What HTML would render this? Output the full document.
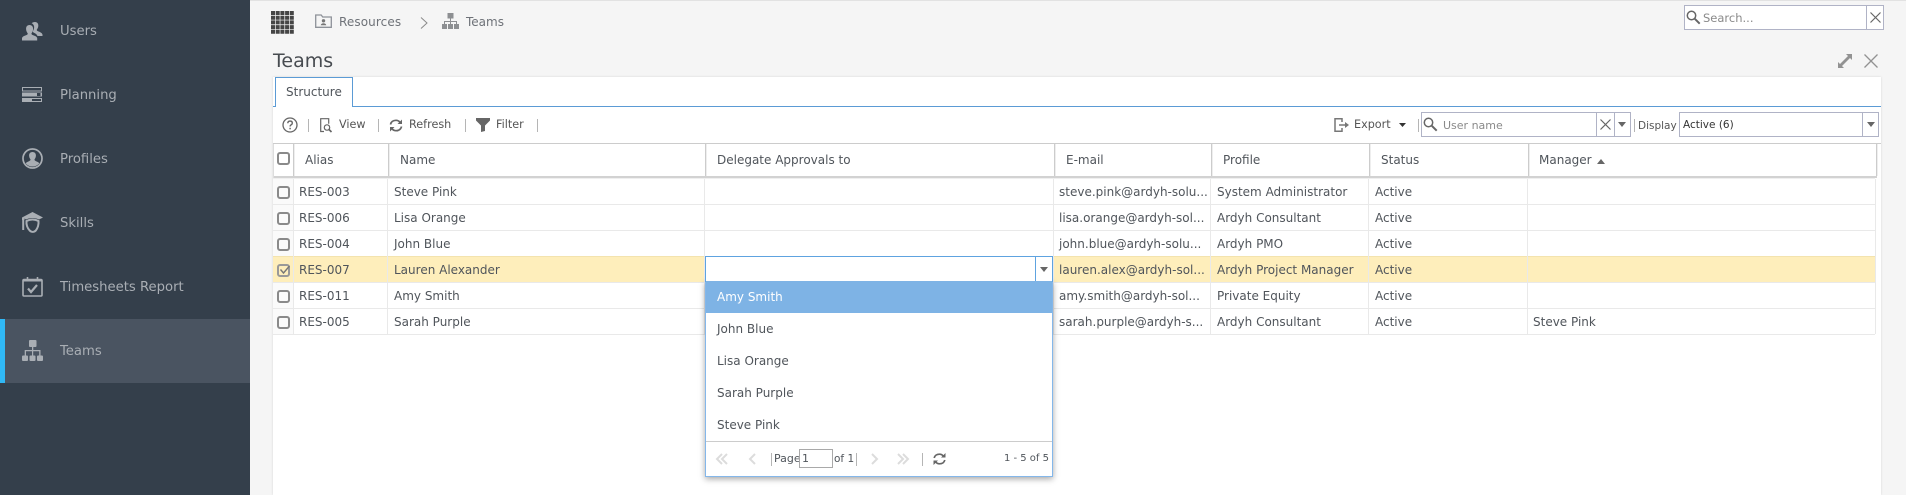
<!DOCTYPE html>
<html><head><meta charset="utf-8"><title>Teams</title>
<style>
html,body{margin:0;padding:0}
body{width:1906px;height:495px;overflow:hidden;background:#f5f5f5;position:relative;font-family:"DejaVu Sans","Liberation Sans",sans-serif;font-size:12px;color:#50555b}
.a{position:absolute}
.t{position:absolute;white-space:nowrap;line-height:20px;height:20px}
.h{position:absolute;background:#e9e9e9}
.nav{font-size:13.2px;color:#a9aeb4;left:60px}
.cb{position:absolute;width:9px;height:9px;border:2px solid #8a8a8a;border-radius:3px;left:277px}
.vs{position:absolute;width:1px;background:#b5b5b5}
.hs{position:absolute;top:144px;height:32px;width:2px;border-left:1px solid #ccc;border-right:1px solid #eee;box-sizing:border-box}
.box{position:absolute;box-sizing:border-box;border:1px solid #b0b3c6;background:#fff}
svg{position:absolute;overflow:visible}
</style></head><body>
<!-- sidebar -->
<div class="a" style="left:0;top:0;width:250px;height:495px;background:#343f4b"></div>
<div class="a" style="left:0;top:319px;width:250px;height:64px;background:#4a5461"></div>
<div class="a" style="left:0;top:319px;width:5px;height:64px;background:#30b8f5"></div>
<div class="t nav" style="top:22px">Users</div>
<div class="t nav" style="top:86px">Planning</div>
<div class="t nav" style="top:150px">Profiles</div>
<div class="t nav" style="top:214px">Skills</div>
<div class="t nav" style="top:278px">Timesheets Report</div>
<div class="t nav" style="top:342px">Teams</div>

<svg style="left:22px;top:21px" width="21" height="20" fill="#a9aeb4"><path d="M13 1c2.500 0 3.500 2 3.300 4-.1 1.500-.8 2.800-1.500 3.600-.2.800.3 1.300 1.500 1.800 1.800.7 3.700 1.400 4.200 3.200v1.400h-5c-.6-1.800-2-2.600-3.800-3.400-.8-.4-1-.9-.8-1.600.8-1.200 1.400-2.500 1.200-4.500C11.900 4 10.600 2.600 9.600 2.300 10.400 1.500 11.500 1 13 1z"/><path d="M7.500 4c2.500 0 3.800 2 3.600 4.200-.1 1.700-.8 3-1.600 4-.2 1 .4 1.500 1.700 2 1.800.7 3.400 1.200 4 2.800v2.500H0v-2.500c.6-1.600 2.200-2.100 4-2.800 1.300-.5 1.900-1 1.700-2-.8-1-1.500-2.300-1.600-4C3.900 6 5 4 7.500 4z"/></svg>

<svg style="left:22px;top:87px" width="20" height="15"><rect x=".5" y=".5" width="19" height="3.500" fill="#343f4b" stroke="#a9aeb4"/><rect x="0" y="5.500" width="20" height="4" fill="#a9aeb4"/><rect x="15" y="6" width="3.500" height="3" fill="#343f4b"/><rect x="0" y="11" width="20" height="4" fill="#a9aeb4"/><rect x="10" y="12" width="9" height="2" fill="#343f4b"/></svg>

<svg style="left:22px;top:148px" width="21" height="21" fill="none"><circle cx="10.500" cy="10.500" r="9.500" stroke="#a9aeb4" stroke-width="1.700"/><path fill="#a9aeb4" d="M10.500 4c2.400 0 3.600 1.800 3.400 3.900-.1 1.500-.7 2.600-1.400 3.500-.1.900.4 1.300 1.500 1.800 1.300.5 2.700 1 3.300 2-1.500 2-3.900 3.300-6.800 3.300s-5.300-1.300-6.800-3.300c.6-1 2-1.500 3.300-2 1.100-.5 1.600-.9 1.500-1.800-.7-.9-1.300-2-1.400-3.500C6.900 5.800 8.100 4 10.500 4z"/></svg>

<svg style="left:22px;top:212px" width="21" height="21" fill="none" stroke="#a9aeb4"><path fill="#a9aeb4" stroke="none" d="M10.500 0L21 5.500 17 7.500C15 6.500 13 6 10.500 6S6 6.500 4 7.500L2.500 6.500V8H0V5.500z"/><path stroke-width="2" d="M1.200 7v11"/><path stroke-width="2" d="M4.500 9c4-2 8-2 12 0 .3 3.500-.8 7-2.700 9.500-1.800 1.800-4.300 1.800-6.100 0C5.300 16 4.200 12.500 4.500 9z"/></svg>

<svg style="left:22px;top:277px" width="21" height="20" fill="none" stroke="#a9aeb4"><rect x="1" y="2.500" width="19" height="16.500" rx="1" stroke-width="1.600"/><path stroke-width="2" d="M1 3.500h19"/><path stroke-width="1.600" d="M5.500 0v4M15.500 0v4"/><path stroke-width="2.200" d="M6 11.500l3 3.500 6-7"/></svg>

<svg style="left:22px;top:340px" width="21" height="21" fill="#a9aeb4"><rect x="7" y="0" width="7.500" height="7" rx="1"/><rect x="0" y="15.500" width="6" height="5.500" rx="1"/><rect x="7.500" y="15.500" width="6" height="5.500" rx="1"/><rect x="15" y="15.500" width="6" height="5.500" rx="1"/><path d="M10 7h1.300v3H18.500v5.500h-1.300V11.200h-6v4.300H10v-4.300H4v4.300H2.700V10H10z"/></svg>

<!-- top bar -->
<div class="a" style="left:250px;top:0;width:1656px;height:1px;background:#e2e2e2"></div>
<svg style="left:271px;top:11px" width="23" height="23"><path fill="#454545" d="M0 0h4v4H0zM4.700 0h4v4h-4zM9.400 0h4v4h-4zM14.100 0h4v4h-4zM18.800 0h4v4h-4zM0 4.700h4v4H0zM4.700 4.700h4v4h-4zM9.400 4.700h4v4h-4zM14.100 4.700h4v4h-4zM18.800 4.700h4v4h-4zM0 9.400h4v4H0zM4.700 9.400h4v4h-4zM9.400 9.400h4v4h-4zM14.100 9.400h4v4h-4zM18.800 9.400h4v4h-4zM0 14.100h4v4H0zM4.700 14.100h4v4h-4zM9.400 14.100h4v4h-4zM14.100 14.100h4v4h-4zM18.800 14.100h4v4h-4zM0 18.800h4v4H0zM4.700 18.800h4v4h-4zM9.400 18.800h4v4h-4zM14.100 18.800h4v4h-4zM18.800 18.800h4v4h-4z"/></svg>
<svg style="left:315px;top:14px" width="17" height="14" fill="none" stroke="#8e9299" stroke-width="1.300"><path d="M.7 13.300V1h5.500l1.500 2h8.600v10.300z"/><circle cx="8.500" cy="6.800" r="1.700" fill="#777" stroke="none"/><path fill="#777" stroke="none" d="M5.700 11.200c.3-1.500 1.500-2 2.800-2s2.500.5 2.800 2z"/></svg>
<div class="t" style="left:339px;top:12px;color:#6e7278;letter-spacing:.1px">Resources</div>
<svg style="left:420px;top:17px" width="8" height="12" fill="none" stroke="#8a8a8a"><path d="M1 .5l6 5.500-6 5.500"/></svg>
<svg style="left:442px;top:13px" width="17" height="16" fill="#8d8f92"><rect x="5.500" y="0" width="6" height="5.500"/><rect x="0" y="11" width="5" height="5"/><rect x="6" y="11" width="5" height="5"/><rect x="12" y="11" width="5" height="5"/><path d="M8 5.500h1V8h6v3h-1V9H9v2H8V9H3v2H2V8h6z"/></svg>
<div class="t" style="left:466px;top:12px;color:#6e7278">Teams</div>
<div class="t" style="left:273px;top:51px;font-size:19px;color:#474b50">Teams</div>

<!-- top-right search -->
<div class="box" style="left:1684px;top:5px;width:200px;height:25px"></div>
<div class="a" style="left:1866px;top:6px;width:1px;height:23px;background:#b0b3c6"></div>
<svg style="left:1686px;top:10px" width="15" height="15" fill="none" stroke="#666" stroke-width="1.500"><circle cx="5.500" cy="5.500" r="4.200"/><path stroke-width="2" d="M8.700 8.700l5 5"/></svg>
<div class="t" style="left:1703px;top:8px;color:#8a8a8a;font-size:11.500px">Search...</div>
<svg style="left:1870px;top:12px" width="11" height="11" fill="none" stroke="#666" stroke-width="1.200"><path d="M.5.500l10 10M10.500.500l-10 10"/></svg>
<svg style="left:1838px;top:54px" width="14" height="14" fill="#929292"><path d="M8 0H14v6l-2-2-8 8L6 14H0V8l2 2 8-8z"/></svg>
<svg style="left:1864px;top:54px" width="14" height="14" fill="none" stroke="#929292" stroke-width="1.300"><path d="M.5.500l13 13M13.500.500l-13 13"/></svg>

<!-- panel -->
<div class="a" style="left:273px;top:77px;width:1608px;height:418px;background:#fff;box-shadow:0 0 2px #d5d5d5"></div>
<div class="a" style="left:273px;top:106px;width:1608px;height:1px;background:#5b9bd5"></div>
<div class="a" style="left:275px;top:77px;width:78px;height:30px;box-sizing:border-box;border:1px solid #5b9bd5;border-bottom:none;background:#fff"></div>
<div class="t" style="left:286px;top:82px;color:#50555b">Structure</div>

<!-- toolbar -->
<svg style="left:282px;top:117px" width="16" height="16" fill="none" stroke="#666"><circle cx="8" cy="8" r="7" stroke-width="1.300"/><path stroke-width="1.400" d="M5.800 6.300c0-1.500 1-2.200 2.300-2.200s2.200.8 2.200 2-.9 1.500-1.500 2c-.5.400-.7.700-.7 1.400"/><path stroke-width="1.500" d="M8.100 10.800v1.500"/></svg>
<div class="vs" style="left:308px;top:119px;height:13px"></div>
<svg style="left:320px;top:118px" width="12" height="15" fill="none" stroke="#666"><path stroke-width="1.200" d="M4 13.500H.7V.7h8v5"/><circle cx="7" cy="9.500" r="2.700" stroke-width="1.200"/><path stroke-width="1.700" d="M9 11.500l2.500 2.500"/></svg>
<div class="t" style="left:339px;top:115px;font-size:11.200px;color:#555">View</div>
<div class="vs" style="left:378px;top:119px;height:13px"></div>
<svg style="left:389px;top:119px" width="14" height="13" fill="none" stroke="#666" stroke-width="1.700"><path d="M1.500 5.500C2 3 4 1.300 7 1.300c1.700 0 3 .7 4 2M12.500 7.500c-.5 2.500-2.500 4.200-5.500 4.200-1.700 0-3-.7-4-2"/><path fill="#666" stroke="none" d="M13 .5v4.500H8.500zM1 12.500V8h4.500z"/></svg>
<div class="t" style="left:409px;top:115px;font-size:11.200px;color:#555">Refresh</div>
<div class="vs" style="left:465px;top:119px;height:13px"></div>
<svg style="left:476px;top:118px" width="14" height="14" fill="#666"><path d="M0 0h14v2.500L9 7.500V13l-4 1V7.500L0 2.500z"/></svg>
<div class="t" style="left:496px;top:115px;font-size:11.200px;color:#555">Filter</div>
<div class="vs" style="left:537px;top:119px;height:13px"></div>

<svg style="left:1334px;top:118px" width="15" height="14" fill="none" stroke="#777" stroke-width="1.500"><path d="M8 4V.8H1v12.400h7V10"/><path d="M5 7h7"/><path fill="#777" stroke="none" d="M11 4l4 3-4 3z"/></svg>
<div class="t" style="left:1354px;top:115px;font-size:11.200px;color:#555">Export</div>
<svg style="left:1399px;top:123px" width="7" height="4" fill="#333"><path d="M0 0h7L3.500 4z"/></svg>
<div class="vs" style="left:1418px;top:119px;height:13px"></div>
<div class="box" style="left:1421px;top:112px;width:210px;height:25px"></div>
<div class="a" style="left:1596px;top:113px;width:1px;height:23px;background:#b0b3c6"></div>
<div class="a" style="left:1614px;top:113px;width:1px;height:23px;background:#b0b3c6"></div>
<svg style="left:1423px;top:117px" width="15" height="15" fill="none" stroke="#666" stroke-width="1.500"><circle cx="5.500" cy="5.500" r="4.200"/><path stroke-width="2" d="M8.700 8.700l5 5"/></svg>
<div class="t" style="left:1443px;top:116px;color:#8a8a8a;font-size:11px">User name</div>
<svg style="left:1600px;top:119px" width="11" height="11" fill="none" stroke="#666" stroke-width="1.200"><path d="M.5.500l10 10M10.500.500l-10 10"/></svg>
<svg style="left:1618px;top:122px" width="8" height="5" fill="#666"><path d="M0 0h8L4 5z"/></svg>
<div class="vs" style="left:1634px;top:119px;height:13px"></div>
<div class="t" style="left:1638px;top:116px;font-size:10.500px;color:#555">Display</div>
<div class="box" style="left:1679px;top:112px;width:200px;height:25px"></div>
<div class="a" style="left:1862px;top:113px;width:1px;height:23px;background:#b0b3c6"></div>
<div class="t" style="left:1683px;top:115px;font-size:10.500px;color:#333">Active (6)</div>
<svg style="left:1867px;top:122px" width="8" height="5" fill="#666"><path d="M0 0h8L4 5z"/></svg>

<!-- grid header -->
<div class="a" style="left:273px;top:143px;width:1608px;height:1px;background:#ccc"></div>
<div class="a" style="left:273px;top:176px;width:1604px;height:2px;background:#d2d2d2"></div>
<div class="a" style="left:273px;top:178px;width:1602px;height:1px;background:#efefef"></div>
<div class="a" style="left:273px;top:144px;width:1px;height:34px;background:#ddd"></div>
<div class="hs" style="left:293px"></div><div class="hs" style="left:388px"></div><div class="hs" style="left:705px"></div><div class="hs" style="left:1054px"></div><div class="hs" style="left:1211px"></div><div class="hs" style="left:1369px"></div><div class="hs" style="left:1528px"></div><div class="hs" style="left:1876px"></div>
<div class="cb" style="left:277px;top:152px"></div>
<div class="t" style="left:305px;top:150px">Alias</div>
<div class="t" style="left:400px;top:150px">Name</div>
<div class="t" style="left:717px;top:150px">Delegate Approvals to</div>
<div class="t" style="left:1066px;top:150px">E-mail</div>
<div class="t" style="left:1223px;top:150px">Profile</div>
<div class="t" style="left:1381px;top:150px">Status</div>
<div class="t" style="left:1539px;top:150px">Manager</div>
<svg style="left:1597px;top:159px" width="8" height="5" fill="#666"><path d="M4 0l4 5H0z"/></svg>

<!-- rows -->
<div class="a" style="left:273px;top:256px;width:1602px;height:26px;background:#feeebb"></div>
<div class="a" style="left:273px;top:179px;width:20px;height:155px;background:#fafafa"></div>
<div class="a" style="left:273px;top:256px;width:20px;height:26px;background:#feeebb"></div>
<div class="h" style="left:273px;top:204px;width:1602px;height:1px"></div>
<div class="h" style="left:273px;top:230px;width:1602px;height:1px"></div>
<div class="h" style="left:273px;top:256px;width:1602px;height:1px;background:#f3e3ae"></div>
<div class="h" style="left:273px;top:282px;width:1602px;height:1px"></div>
<div class="h" style="left:273px;top:308px;width:1602px;height:1px"></div>
<div class="h" style="left:273px;top:334px;width:1602px;height:1px"></div>
<div class="h" style="left:293px;top:179px;width:1px;height:155px"></div>
<div class="h" style="left:387px;top:179px;width:1px;height:155px"></div>
<div class="h" style="left:704px;top:179px;width:1px;height:155px"></div>
<div class="h" style="left:1053px;top:179px;width:1px;height:155px"></div>
<div class="h" style="left:1210px;top:179px;width:1px;height:155px"></div>
<div class="h" style="left:1368px;top:179px;width:1px;height:155px"></div>
<div class="h" style="left:1527px;top:179px;width:1px;height:155px"></div>
<div class="h" style="left:1875px;top:179px;width:1px;height:155px"></div>

<div class="cb" style="top:186px"></div><div class="cb" style="top:212px"></div><div class="cb" style="top:238px"></div>
<div class="cb" style="top:264px;border-color:#999"></div><div class="cb" style="top:290px"></div><div class="cb" style="top:316px"></div>
<svg style="left:279px;top:265px" width="12" height="10" fill="none" stroke="#777" stroke-width="1.400"><path d="M1.500 4.500l3 3.500 6-7"/></svg>

<div class="t" style="left:299px;top:182px">RES-003</div><div class="t" style="left:394px;top:182px">Steve Pink</div><div class="t" style="left:1059px;top:182px">steve.pink@ardyh-solu...</div><div class="t" style="left:1217px;top:182px">System Administrator</div><div class="t" style="left:1375px;top:182px">Active</div>
<div class="t" style="left:299px;top:208px">RES-006</div><div class="t" style="left:394px;top:208px">Lisa Orange</div><div class="t" style="left:1059px;top:208px">lisa.orange@ardyh-sol...</div><div class="t" style="left:1217px;top:208px">Ardyh Consultant</div><div class="t" style="left:1375px;top:208px">Active</div>
<div class="t" style="left:299px;top:234px">RES-004</div><div class="t" style="left:394px;top:234px">John Blue</div><div class="t" style="left:1059px;top:234px">john.blue@ardyh-solu...</div><div class="t" style="left:1217px;top:234px">Ardyh PMO</div><div class="t" style="left:1375px;top:234px">Active</div>
<div class="t" style="left:299px;top:260px">RES-007</div><div class="t" style="left:394px;top:260px">Lauren Alexander</div><div class="t" style="left:1059px;top:260px">lauren.alex@ardyh-sol...</div><div class="t" style="left:1217px;top:260px">Ardyh Project Manager</div><div class="t" style="left:1375px;top:260px">Active</div>
<div class="t" style="left:299px;top:286px">RES-011</div><div class="t" style="left:394px;top:286px">Amy Smith</div><div class="t" style="left:1059px;top:286px">amy.smith@ardyh-sol...</div><div class="t" style="left:1217px;top:286px">Private Equity</div><div class="t" style="left:1375px;top:286px">Active</div>
<div class="t" style="left:299px;top:312px">RES-005</div><div class="t" style="left:394px;top:312px">Sarah Purple</div><div class="t" style="left:1059px;top:312px">sarah.purple@ardyh-s...</div><div class="t" style="left:1217px;top:312px">Ardyh Consultant</div><div class="t" style="left:1375px;top:312px">Active</div><div class="t" style="left:1533px;top:312px">Steve Pink</div>

<!-- combo + dropdown -->
<div class="a" style="left:705px;top:281px;width:348px;height:196px;box-sizing:border-box;background:#fff;border:1px solid #84b7ea;box-shadow:0 2px 6px rgba(0,0,0,.35)"></div>
<div class="a" style="left:705px;top:256px;width:348px;height:26px;box-sizing:border-box;background:#fff;border:1px solid #5ea3e0"></div>
<div class="a" style="left:1035px;top:257px;width:1px;height:24px;background:#5ea3e0"></div>
<svg style="left:1040px;top:267px" width="8" height="5" fill="#666"><path d="M0 0h8L4 5z"/></svg>
<div class="a" style="left:706px;top:281px;width:346px;height:32px;background:#7eb3e5"></div>
<div class="t" style="left:717px;top:287px;color:#fff">Amy Smith</div>
<div class="t" style="left:717px;top:319px">John Blue</div>
<div class="t" style="left:717px;top:351px">Lisa Orange</div>
<div class="t" style="left:717px;top:383px">Sarah Purple</div>
<div class="t" style="left:717px;top:415px">Steve Pink</div>
<div class="a" style="left:706px;top:441px;width:346px;height:1px;background:#ccc"></div>
<svg style="left:716px;top:453px" width="12" height="12" fill="none" stroke="#dcdcdc" stroke-width="2"><path d="M6 1L1 6l5 5M11 1L6 6l5 5"/></svg>
<svg style="left:749px;top:453px" width="7" height="12" fill="none" stroke="#dcdcdc" stroke-width="2"><path d="M6 1L1 6l5 5"/></svg>
<div class="vs" style="left:771px;top:453px;height:13px"></div>
<div class="t" style="left:774px;top:449px;font-size:11px">Page</div>
<div class="a" style="left:799px;top:449px;width:34px;height:19px;box-sizing:border-box;border:1px solid #a9a9a9;background:#fff"></div>
<div class="t" style="left:802px;top:449px;font-size:11px">1</div>
<div class="t" style="left:834px;top:449px;font-size:10.500px">of 1</div>
<div class="vs" style="left:856px;top:453px;height:13px"></div>
<svg style="left:871px;top:453px" width="7" height="12" fill="none" stroke="#dcdcdc" stroke-width="2"><path d="M1 1l5 5-5 5"/></svg>
<svg style="left:897px;top:453px" width="12" height="12" fill="none" stroke="#dcdcdc" stroke-width="2"><path d="M1 1l5 5-5 5M6 1l5 5-5 5"/></svg>
<div class="vs" style="left:922px;top:453px;height:13px"></div>
<svg style="left:933px;top:453px" width="13" height="12" fill="none" stroke="#666" stroke-width="1.700"><path d="M1.200 5C1.700 2.700 3.700 1.200 6.500 1.200c1.500 0 2.800.6 3.700 1.800M11.800 7c-.5 2.300-2.500 3.800-5.300 3.800-1.500 0-2.800-.6-3.700-1.800"/><path fill="#666" stroke="none" d="M12.500 0v4.500H8zM.5 12V7.500H5z"/></svg>
<div class="t" style="right:857px;top:449px;font-size:10px">1 - 5 of 5</div>
</body></html>
